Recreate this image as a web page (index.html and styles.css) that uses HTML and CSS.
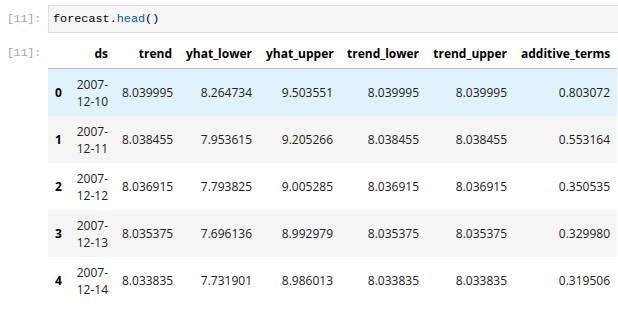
FILE: index.html
```html
<!DOCTYPE html>
<html>
<head>
<meta charset="utf-8">
<link rel="stylesheet" href="styles.css">
</head>
<body>
<div class="notebook">
  <div class="cell input-cell">
    <div class="prompt">[11]:</div>
    <div class="editor"><span class="var">forecast</span><span class="op">.</span><span class="prop">head</span><span class="op">()</span></div>
  </div>
  <div class="cell output-cell">
    <div class="prompt out-prompt">[11]:</div>
    <div class="output">
      <table class="dataframe">
        <colgroup>
          <col class="c-idx"><col class="c-ds"><col class="c-trend"><col class="c-ylow"><col class="c-yup"><col class="c-tlow"><col class="c-tup"><col class="c-add">
        </colgroup>
        <thead>
          <tr><th></th><th>ds</th><th>trend</th><th>yhat_lower</th><th>yhat_upper</th><th>trend_lower</th><th>trend_upper</th><th>additive_terms</th></tr>
        </thead>
        <tbody>
          <tr class="hover"><th>0</th><td>2007-12-10</td><td>8.039995</td><td>8.264734</td><td>9.503551</td><td>8.039995</td><td>8.039995</td><td>0.803072</td></tr>
          <tr><th>1</th><td>2007-12-11</td><td>8.038455</td><td>7.953615</td><td>9.205266</td><td>8.038455</td><td>8.038455</td><td>0.553164</td></tr>
          <tr><th>2</th><td>2007-12-12</td><td>8.036915</td><td>7.793825</td><td>9.005285</td><td>8.036915</td><td>8.036915</td><td>0.350535</td></tr>
          <tr><th>3</th><td>2007-12-13</td><td>8.035375</td><td>7.696136</td><td>8.992979</td><td>8.035375</td><td>8.035375</td><td>0.329980</td></tr>
          <tr><th>4</th><td>2007-12-14</td><td>8.033835</td><td>7.731901</td><td>8.986013</td><td>8.033835</td><td>8.033835</td><td>0.319506</td></tr>
        </tbody>
      </table>
    </div>
  </div>
</div>
</body>
</html>
```

FILE: styles.css
```css
html, body {
  margin: 0;
  padding: 0;
  background: #ffffff;
  overflow: hidden;
}

.notebook {
  width: 618px;
  padding-top: 5px;
  font-family: "Open Sans", "Noto Sans", sans-serif;
  color: #212121;
}

.cell {
  display: flex;
}

.input-cell {
  align-items: center;
}

.prompt {
  width: 48px;
  flex: none;
  box-sizing: border-box;
  padding-right: 7px;
  text-align: right;
  font-family: "Liberation Mono", "DejaVu Sans Mono", monospace;
  font-size: 11.3px;
  color: #a5a5a5;
}

.editor {
  flex: 1;
  margin-right: -12px;
  height: 28px;
  box-sizing: border-box;
  border: 1px solid #e0e0e0;
  background: #f5f5f5;
  padding: 0 4px;
  font-family: "Liberation Mono", "DejaVu Sans Mono", monospace;
  font-size: 11.8px;
  line-height: 27px;
  color: #000000;
}

.prop {
  color: #0055aa;
}

.output-cell {
  margin-top: 5px;
  align-items: flex-start;
}

.out-prompt {
  padding-top: 7px;
  line-height: 17px;
}

.dataframe {
  table-layout: fixed;
  width: 569px;
  border-collapse: collapse;
  border-spacing: 0;
  font-size: 12px;
  line-height: 17px;
}

.c-idx { width: 21px; }
.c-ds { width: 46px; }
.c-trend { width: 64px; }
.c-ylow { width: 80px; }
.c-yup { width: 81px; }
.c-tlow { width: 86px; }
.c-tup { width: 88px; }
.c-add { width: 103px; }

.dataframe th,
.dataframe td {
  padding: 6.5px 7px;
  text-align: right;
  vertical-align: middle;
}

.dataframe thead th {
  font-weight: 700;
  color: #000000;
  white-space: nowrap;
  border-bottom: 1px solid #bdbdbd;
}

.dataframe tbody th {
  font-weight: 700;
  color: #000000;
  text-align: left;
  padding-right: 0;
}

.dataframe tbody tr:nth-child(even) {
  background: #f5f5f5;
}

.dataframe tbody tr.hover {
  background: #e0f2fc;
}
```
